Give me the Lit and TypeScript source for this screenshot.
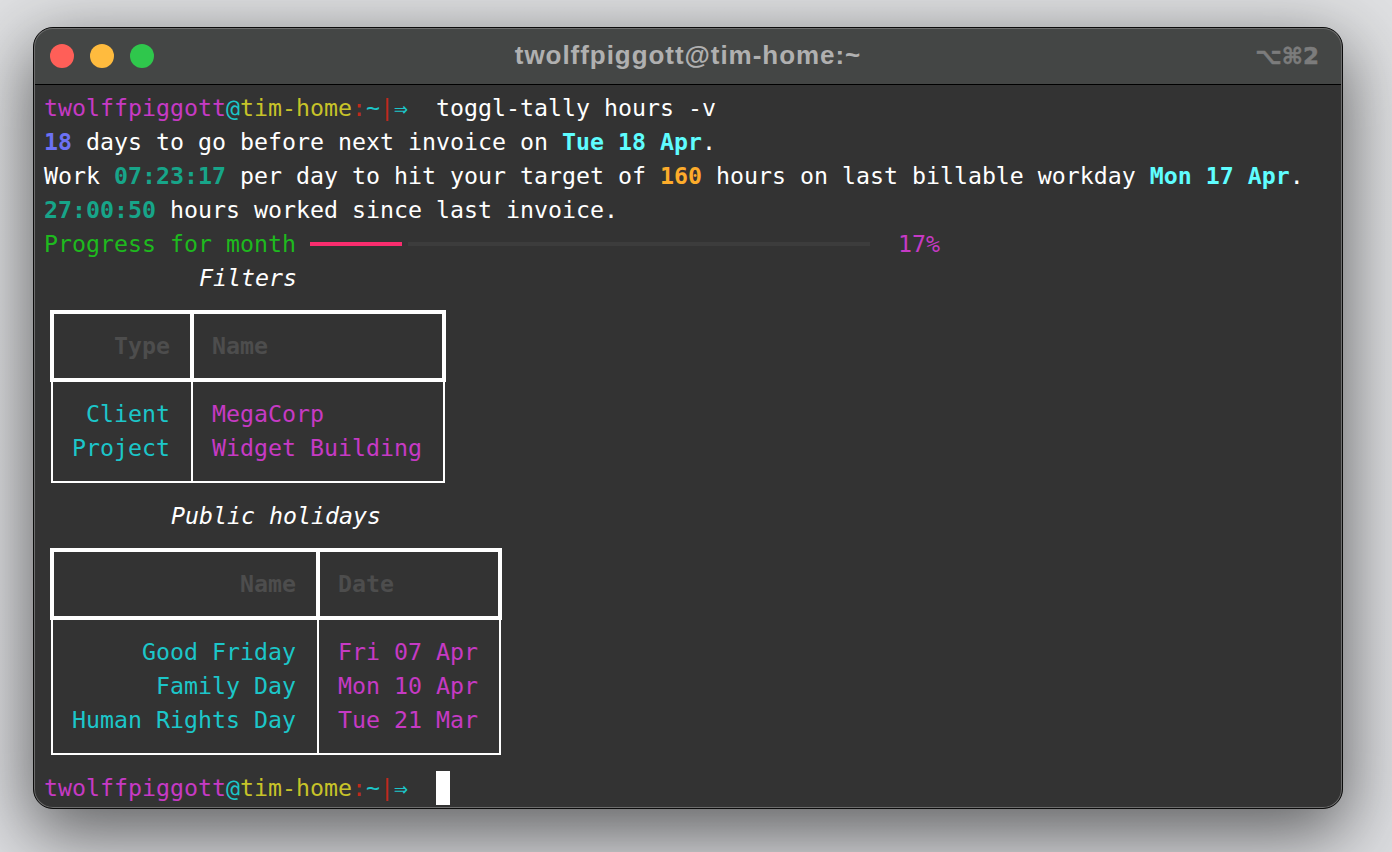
import { LitElement, html, css } from "lit";
import { customElement, property } from "lit/decorators.js";

@customElement("term-table")
class TermTable extends LitElement {
  @property({ type: Array }) headers: string[] = [];
  @property({ type: Array }) left: string[] = [];
  @property({ type: Array }) right: string[] = [];
  @property() caption = "";
  static styles = css`
    :host { display: block; width: max-content; margin: 0 0 16px 6px; --c1: 98px; --c2: 210px; }
    :host(.holidays) { --c1: 224px; --c2: 140px; }
    .cap { height: 34px; line-height: 34px; text-align: center; font-style: italic; color: #fff; }
    .head { display: grid; grid-template-columns: auto auto; width: max-content; margin-top: 15px; border: 4px solid #fff; font-weight: 700; color: #4d4d4d; }
    .head div { padding: 15px 20px 15px 18px; height: 34px; line-height: 34px; }
    .head .a { width: var(--c1); text-align: right; border-right: 4px solid #fff; }
    .head .b { width: var(--c2); }
    .body { display: grid; grid-template-columns: auto auto; width: max-content; margin-left: 1px; border: 2px solid #fff; border-top: 0; }
    .body > div { padding: 15px 21px 16px 19px; }
    .body .a { width: var(--c1); text-align: right; border-right: 2px solid #fff; color: #1cc6c9; }
    .body .b { width: var(--c2); color: #c63ac4; }
    .ln { height: 34px; line-height: 34px; white-space: pre; }
  `;
  render() {
    return html`
      <div class="cap">${this.caption}</div>
      <div class="head"><div class="a">${this.headers[0]}</div><div class="b">${this.headers[1]}</div></div>
      <div class="body">
        <div class="a">${this.left.map((t) => html`<div class="ln">${t}</div>`)}</div>
        <div class="b">${this.right.map((t) => html`<div class="ln">${t}</div>`)}</div>
      </div>
    `;
  }
}

@customElement("app-root")
class AppRoot extends LitElement {
  static styles = css`
    :host { display: block; width: 1392px; height: 852px; overflow: hidden; position: relative;
      background: linear-gradient(180deg, #dfe0e2 0%, #dcdde0 100%); padding: 27px 0 0 33px; box-sizing: border-box; }
    .win { width: 1310px; height: 782px; box-sizing: border-box; border: 1px solid #0c0c0c; border-radius: 20px;
      background: #333; overflow: hidden; box-shadow: 0 22px 70px 4px rgba(0,0,0,.56); display: flex; flex-direction: column; position: relative; }
    .win::after { content: ""; position: absolute; inset: 0; border-radius: 19px; box-shadow: inset 0 0 0 1px #6e6e6e; pointer-events: none; }
    .bar { height: 57px; flex: none; box-sizing: border-box; background: #444645; border-bottom: 1px solid #000;
      display: flex; align-items: center; padding: 0 23px 1px 16px; position: relative; }
    .dots { display: flex; gap: 16px; }
    .dot { width: 24px; height: 24px; border-radius: 50%; }
    .r { background: #ff5f58; } .y { background: #ffbb3e; } .g { background: #2fc74c; }
    .title { position: absolute; left: 0; right: 0; top: 0; bottom: 1px; display: flex; align-items: center; justify-content: center;
      font: 700 26px "Liberation Sans", sans-serif; letter-spacing: 0.95px; color: #b0b0b0; }
    .keys { margin-left: auto; font: 700 23px "DejaVu Sans", sans-serif; color: #7c7c7c; -webkit-text-stroke: 0.5px #7c7c7c; }
    .term { flex: 1; padding: 6px 0 0 10px; font: 400 23.25px "DejaVu Sans Mono", monospace; color: #fff; }
    .line { height: 34px; line-height: 34px; white-space: pre; display: flex; align-items: center; }
    .p { color: #c63ac4; } .c { color: #1cc6c9; } .yl { color: #c7c329; } .rd { color: #bf2a1d; }
    .bb { color: #6c71f4; font-weight: 700; } .bc { color: #5ffdff; font-weight: 700; }
    .bt { color: #17a589; font-weight: 700; } .bo { color: #fdac2b; font-weight: 700; } .gr { color: #1eba1e; }
    .track { width: 560px; height: 4px; margin-left: 14px; background: linear-gradient(90deg, #f92d6e 0 92px, transparent 92px 98px, #3c3c3c 98px); }
    .pct { margin-left: 28px; }
    .cursor { display: inline-block; width: 14px; height: 34px; background: #fff; }
  `;
  prompt() {
    return html`<span class="p">twolffpiggott</span><span class="c">@</span><span class="yl">tim-home</span><span class="rd">:</span><span class="c">~</span><span class="rd">|</span><span class="c">⇒</span>  `;
  }
  render() {
    return html`<div class="win">
      <div class="bar">
        <div class="dots"><div class="dot r"></div><div class="dot y"></div><div class="dot g"></div></div>
        <div class="title">twolffpiggott@tim-home:~</div>
        <div class="keys">⌥⌘2</div>
      </div>
      <div class="term">
        <div class="line"><span>${this.prompt()}toggl-tally hours -v</span></div>
        <div class="line"><span><span class="bb">18</span> days to go before next invoice on <span class="bc">Tue 18 Apr</span>.</span></div>
        <div class="line"><span>Work <span class="bt">07:23:17</span> per day to hit your target of <span class="bo">160</span> hours on last billable workday <span class="bc">Mon 17 Apr</span>.</span></div>
        <div class="line"><span><span class="bt">27:00:50</span> hours worked since last invoice.</span></div>
        <div class="line"><span class="gr">Progress for month</span><div class="track"></div><span class="pct p">17%</span></div>
        <term-table caption="Filters" .headers=${["Type", "Name"]} .left=${["Client", "Project"]} .right=${["MegaCorp", "Widget Building"]}></term-table>
        <term-table class="holidays" caption="Public holidays" .headers=${["Name", "Date"]} .left=${["Good Friday", "Family Day", "Human Rights Day"]} .right=${["Fri 07 Apr", "Mon 10 Apr", "Tue 21 Mar"]}></term-table>
        <div class="line"><span>${this.prompt()}</span><span class="cursor"></span></div>
      </div>
    </div>`;
  }
}
